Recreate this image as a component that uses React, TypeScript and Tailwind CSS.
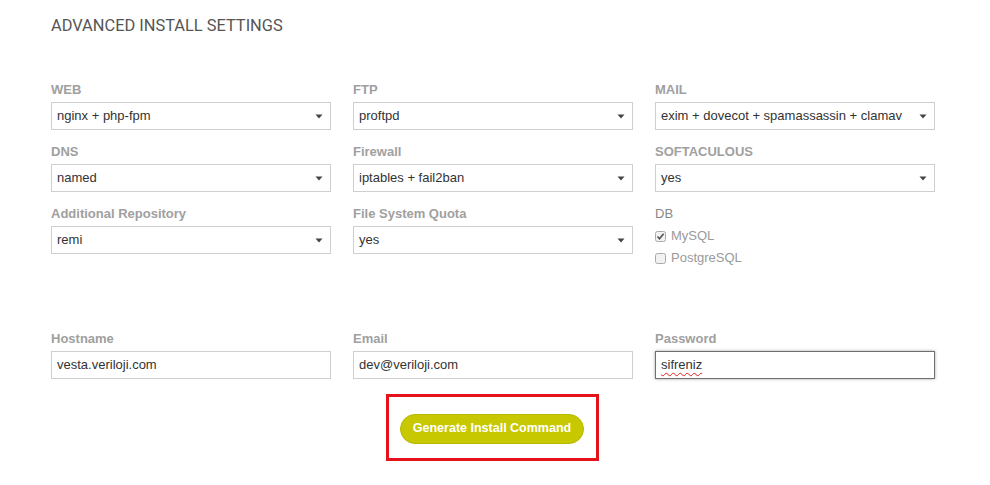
import React from "react";

const Arrow = () => (
  <svg width="8" height="5" viewBox="0 0 8 5" className="shrink-0">
    <path d="M0.5 0.5 L7.5 0.5 L4 4.5 Z" fill="#444" />
  </svg>
);

const Label = ({ children }: { children: React.ReactNode }) => (
  <div className="text-[13px] leading-[16px] font-bold text-[#a0a0a0] mb-[4px]">{children}</div>
);

const Select = ({ value }: { value: string }) => (
  <div className="h-[28px] border border-[#cfcfcf] bg-white flex items-center justify-between pl-[5px] pr-[7px] text-[13px] text-[#333]">
    <span>{value}</span>
    <Arrow />
  </div>
);

const Field = ({ label, value }: { label: string; value: string }) => (
  <div className="mb-[14px]">
    <Label>{label}</Label>
    <Select value={value} />
  </div>
);

const Check = ({ checked, label }: { checked: boolean; label: string }) => (
  <div className="flex items-center h-[22px] gap-[5px]">
    <svg width="11" height="11" viewBox="0 0 11 11">
      <rect x="0.5" y="0.5" width="10" height="10" rx="2" fill="#f2f2f2" stroke="#aaa" />
      {checked && <path d="M2.5 5.5 L4.5 7.8 L8.6 2.8" fill="none" stroke="#555" strokeWidth="1.6" />}
    </svg>
    <span className="text-[13px] text-[#9a9a9a]">{label}</span>
  </div>
);

const Input = ({ value, focused }: { value: string; focused?: boolean }) => (
  <div
    className={
      "h-[28px] bg-white flex items-center pl-[5px] text-[13px] text-[#333] " +
      (focused ? "border border-[#6f6f6f] shadow-[0_0_3px_rgba(0,0,0,0.35)]" : "border border-[#cfcfcf]")
    }
  >
    {focused ? (
      <span className="underline decoration-wavy decoration-[#e02020] underline-offset-[3px] decoration-1">{value}</span>
    ) : (
      <span>{value}</span>
    )}
  </div>
);

export default function App() {
  return (
    <div
      className="w-[990px] h-[485px] bg-white pt-[15px] pl-[51px] overflow-hidden"
      style={{ fontFamily: '"Liberation Sans", Arial, sans-serif' }}
    >
      <h1
        className="text-[16.4px] leading-[22px] text-[#555]"
        style={{ fontFamily: 'Roboto, "Liberation Sans", sans-serif' }}
      >
        ADVANCED INSTALL SETTINGS
      </h1>

      <div className="grid grid-cols-3 gap-x-[22px] w-[884px] mt-[45px]">
        <div>
          <Field label="WEB" value="nginx + php-fpm" />
          <Field label="DNS" value="named" />
          <Field label="Additional Repository" value="remi" />
        </div>
        <div>
          <Field label="FTP" value="proftpd" />
          <Field label="Firewall" value="iptables + fail2ban" />
          <Field label="File System Quota" value="yes" />
        </div>
        <div>
          <Field label="MAIL" value="exim + dovecot + spamassassin + clamav" />
          <Field label="SOFTACULOUS" value="yes" />
          <div>
            <div className="text-[13px] leading-[16px] text-[#888] mb-[3px]">DB</div>
            <Check checked label="MySQL" />
            <Check checked={false} label="PostgreSQL" />
          </div>
        </div>
      </div>

      <div className="grid grid-cols-3 gap-x-[22px] w-[884px] mt-[62px]">
        <div>
          <Label>Hostname</Label>
          <Input value="vesta.veriloji.com" />
        </div>
        <div>
          <Label>Email</Label>
          <Input value="dev@veriloji.com" />
        </div>
        <div>
          <Label>Password</Label>
          <Input value="sifreniz" focused />
        </div>
      </div>

      <div className="w-[882px] flex justify-center mt-[15px]">
        <div className="w-[213px] h-[67px] border-[3px] border-[#e3121b] flex items-center justify-center">
          <button className="w-[184px] h-[30px] mt-[2px] rounded-full bg-[#c8c800] border border-[#b8b800] text-white text-[12.5px] font-bold">
            Generate Install Command
          </button>
        </div>
      </div>
    </div>
  );
}
